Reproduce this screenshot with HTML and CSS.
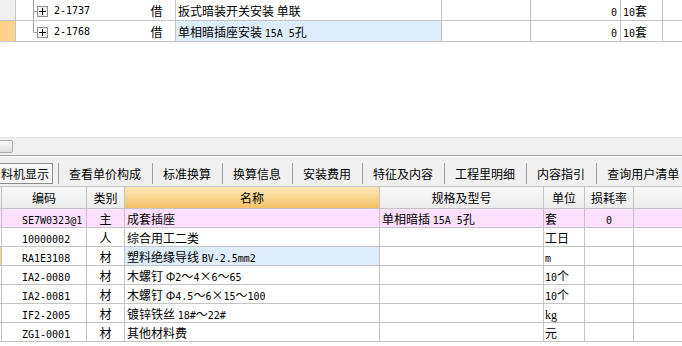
FILE: index.html
```html
<!DOCTYPE html>
<html>
<head>
<meta charset="utf-8">
<link rel="stylesheet" href="styles.css">
</head>
<body>
<div class="top">
  <div class="trow">
    <div class="c ind"></div>
    <div class="c tree"><svg class="tw" width="32" height="20" viewBox="0 0 32 20"><line x1="17.5" y1="0" x2="17.5" y2="20" stroke="#a0a0a0"/><line x1="17.5" y1="11.5" x2="21" y2="11.5" stroke="#a0a0a0"/><rect x="21.5" y="6.5" width="10" height="10" fill="#f2f2f2" stroke="#8e8e8e"/><line x1="23" y1="11.5" x2="30" y2="11.5" stroke="#000"/><line x1="26.5" y1="8" x2="26.5" y2="15" stroke="#000"/></svg><span class="a code">2-1737</span></div>
    <div class="c ctr">借</div>
    <div class="c name">扳式暗装开关安装 单联</div>
    <div class="c"></div>
    <div class="c num"><span class="a">0</span></div>
    <div class="c unit"><span class="a">10</span>套</div>
    <div class="c last"></div>
  </div>
  <div class="trow">
    <div class="c ind sel"></div>
    <div class="c tree"><svg class="tw" width="32" height="20" viewBox="0 0 32 20"><line x1="17.5" y1="0" x2="17.5" y2="11.5" stroke="#a0a0a0"/><line x1="17.5" y1="11.5" x2="21" y2="11.5" stroke="#a0a0a0"/><rect x="21.5" y="6.5" width="10" height="10" fill="#f2f2f2" stroke="#8e8e8e"/><line x1="23" y1="11.5" x2="30" y2="11.5" stroke="#000"/><line x1="26.5" y1="8" x2="26.5" y2="15" stroke="#000"/></svg><span class="a code">2-1768</span></div>
    <div class="c ctr">借</div>
    <div class="c name blue">单相暗插座安装 <span class="a">15A 5</span>孔</div>
    <div class="c"></div>
    <div class="c num"><span class="a">0</span></div>
    <div class="c unit"><span class="a">10</span>套</div>
    <div class="c last"></div>
  </div>
</div>
<div class="hscroll"><div class="thumb"></div></div>
<div class="tabs">
  <div class="tab active">料机显示</div>
  <div class="tab">查看单价构成</div>
  <div class="tab">标准换算</div>
  <div class="tab">换算信息</div>
  <div class="tab">安装费用</div>
  <div class="tab">特征及内容</div>
  <div class="tab">工程里明细</div>
  <div class="tab">内容指引</div>
  <div class="tab">查询用户清单</div>
</div>
<div class="grid">
  <div class="brow head">
    <div class="c"></div>
    <div class="c ctr">编码</div>
    <div class="c ctr">类别</div>
    <div class="c ctr hot">名称</div>
    <div class="c ctr">规格及型号</div>
    <div class="c ctr">单位</div>
    <div class="c ctr">损耗率</div>
    <div class="c last"></div>
  </div>
  <div class="brow pink">
    <div class="c"></div>
    <div class="c code2"><span class="a">SE7W0323@1</span></div>
    <div class="c ctr">主</div>
    <div class="c name">成套插座</div>
    <div class="c name">单相暗插 <span class="a">15A 5</span>孔</div>
    <div class="c unit">套</div>
    <div class="c ctr"><span class="a">0</span></div>
    <div class="c last"></div>
  </div>
  <div class="brow">
    <div class="c"></div>
    <div class="c code2"><span class="a">10000002</span></div>
    <div class="c ctr">人</div>
    <div class="c name">综合用工二类</div>
    <div class="c name"></div>
    <div class="c unit">工日</div>
    <div class="c"></div>
    <div class="c last"></div>
  </div>
  <div class="brow">
    <div class="c sel"></div>
    <div class="c code2"><span class="a">RA1E3108</span></div>
    <div class="c ctr">材</div>
    <div class="c name blue">塑料绝缘导线 <span class="a">BV-2.5mm2</span></div>
    <div class="c name"></div>
    <div class="c unit"><span class="a">m</span></div>
    <div class="c"></div>
    <div class="c last"></div>
  </div>
  <div class="brow">
    <div class="c"></div>
    <div class="c code2"><span class="a">IA2-0080</span></div>
    <div class="c ctr">材</div>
    <div class="c name">木螺钉 Φ<span class="a">2</span>～<span class="a">4</span>×<span class="a">6</span>～<span class="a">65</span></div>
    <div class="c name"></div>
    <div class="c unit"><span class="a">10</span>个</div>
    <div class="c"></div>
    <div class="c last"></div>
  </div>
  <div class="brow">
    <div class="c"></div>
    <div class="c code2"><span class="a">IA2-0081</span></div>
    <div class="c ctr">材</div>
    <div class="c name">木螺钉 Φ<span class="a">4.5</span>～<span class="a">6</span>×<span class="a">15</span>～<span class="a">100</span></div>
    <div class="c name"></div>
    <div class="c unit"><span class="a">10</span>个</div>
    <div class="c"></div>
    <div class="c last"></div>
  </div>
  <div class="brow">
    <div class="c"></div>
    <div class="c code2"><span class="a">IF2-2005</span></div>
    <div class="c ctr">材</div>
    <div class="c name">镀锌铁丝 <span class="a">18#</span>～<span class="a">22#</span></div>
    <div class="c name"></div>
    <div class="c unit"><span class="s">kg</span></div>
    <div class="c"></div>
    <div class="c last"></div>
  </div>
  <div class="brow">
    <div class="c"></div>
    <div class="c code2"><span class="a">ZG1-0001</span></div>
    <div class="c ctr">材</div>
    <div class="c name">其他材料费</div>
    <div class="c name"></div>
    <div class="c unit">元</div>
    <div class="c"></div>
    <div class="c last"></div>
  </div>
</div>
</body>
</html>
```
FILE: styles.css
```css
* { box-sizing: border-box; }
html, body { margin: 0; padding: 0; background: #fff; }
body {
  width: 682px; height: 346px; overflow: hidden;
  font-family: "Noto Sans CJK SC", "Liberation Sans", sans-serif;
  font-size: 12px; color: #000;
}
.a { font-family: "DejaVu Sans Mono", "Liberation Mono", monospace; font-size: 10px; }
.s { font-family: "Liberation Serif", serif; font-size: 12px; }

.top { height: 137px; background: #fff; }
.trow {
  display: grid;
  grid-template-columns: 16px 122px 38px 266px 89px 90px 42px 1fr;
  height: 21px;
  border-bottom: 1px solid #c4c4c4;
}
.c {
  display: block;
  border-right: 1px solid #c4c4c4;
  white-space: pre; overflow: hidden;
  line-height: 21px;
}
.trow .c { line-height: 22px; }
.ind { background: #efefef; }
.sel { background: #ffd38c; }
.tree { border-right: none; display: flex; align-items: center; }
.tw { flex: none; display: block; }
.code { margin-left: 6px; line-height: 14px; padding-top: 2px; }
.ctr { text-align: center; }
.name { padding-left: 2px; }
.blue { background: #deedfb; }
.num { text-align: right; padding-right: 3px; }
.unit { padding-left: 1px; }
.trow .unit { padding-left: 2px; }
.last { border-right: none; }

.hscroll {
  height: 18px; background: #f0f0f0;
  border-top: 1px solid #e2e2e2;
  padding-top: 2px;
}
.thumb {
  width: 13px; height: 13px;
  border: 1px solid #a8a8a8; border-left: none;
  border-radius: 0 2px 2px 0;
  background: linear-gradient(#fbfbfb, #dedede);
}

.tabs {
  height: 31px; background: #f0f0f0;
  border-top: 1px solid #a0a0a0;
  box-shadow: inset 0 1px 0 #fff;
  display: flex; align-items: flex-start;
  padding-top: 7px;
  white-space: nowrap; overflow: hidden;
}
.tab {
  flex: none;
  height: 21px; line-height: 21px;
  padding: 0 11px 0 10px;
  border-left: 1px solid #a0a0a0;
}
.tab.active {
  margin-left: -13px;
  padding: 0 3px 0 13px;
  margin-right: 5px;
  border: 1px solid #8a8a8a;
  box-shadow: inset 1px 1px 0 #fff, inset -1px -1px 0 #fff;
  background: #f6f6f6;
  line-height: 19px;
}

.grid { border-top: 1px solid #c4c4c4; }
.brow {
  display: grid;
  grid-template-columns: 2px 85px 38px 255px 164px 41px 49px 1fr;
  height: 19px;
  border-bottom: 1px solid #c4c4c4;
}
.brow .c { line-height: 19px; }
.brow.head {
  height: 22px;
  background: linear-gradient(#f8f8f8, #ececec);
}
.brow.head .c { line-height: 21px; }
.hot { background: linear-gradient(#fde7b9, #f4c264); }
.pink { background: #ffe0ff; }
.code2 { padding-left: 20px; }
```
